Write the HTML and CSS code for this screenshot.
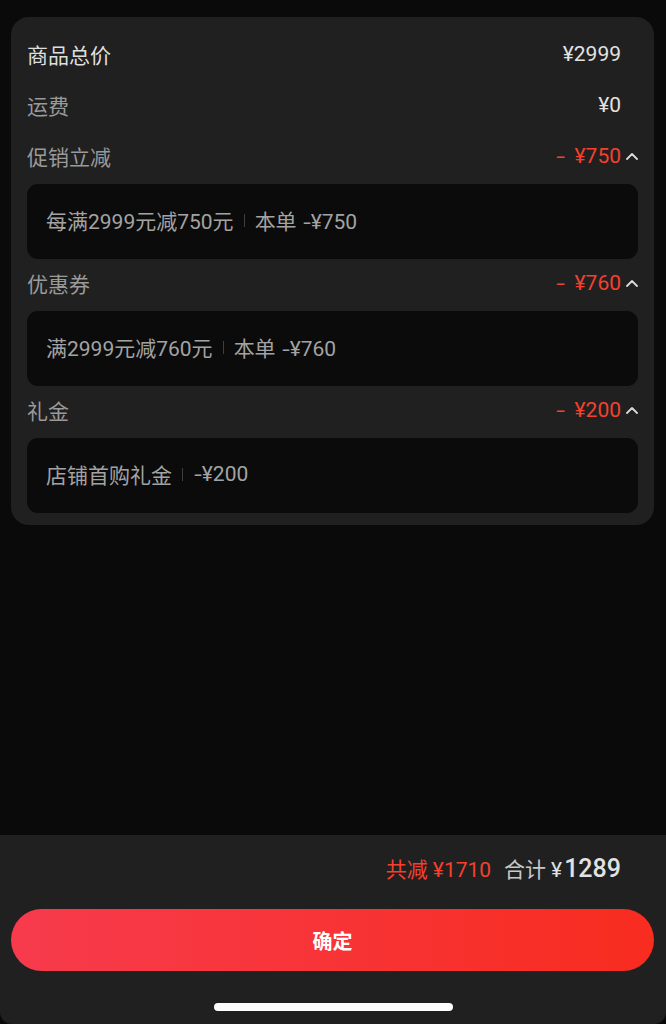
FILE: index.html
```html
<!DOCTYPE html>
<html lang="zh">
<head>
<meta charset="utf-8">
<link rel="stylesheet" href="styles.css">
</head>
<body>
<div class="page">
  <div class="card">
    <div class="row">
      <span class="label strong">商品总价</span>
      <span class="value">¥2999</span>
      <span class="chev-slot"></span>
    </div>
    <div class="row">
      <span class="label">运费</span>
      <span class="value">¥0</span>
      <span class="chev-slot"></span>
    </div>
    <div class="row">
      <span class="label">促销立减</span>
      <span class="value red"><span class="minus">-</span>¥750</span>
      <span class="chev-slot"><svg class="chev" viewBox="0 0 12 8"><path d="M1 7 L6 2 L11 7" /></svg></span>
    </div>
    <div class="detail">
      <span>每满2999元减750元</span><i class="sep"></i><span>本单 <span class="dash">-</span>¥750</span>
    </div>
    <div class="row sub">
      <span class="label">优惠券</span>
      <span class="value red"><span class="minus">-</span>¥760</span>
      <span class="chev-slot"><svg class="chev" viewBox="0 0 12 8"><path d="M1 7 L6 2 L11 7" /></svg></span>
    </div>
    <div class="detail">
      <span>满2999元减760元</span><i class="sep"></i><span>本单 <span class="dash">-</span>¥760</span>
    </div>
    <div class="row sub">
      <span class="label">礼金</span>
      <span class="value red"><span class="minus">-</span>¥200</span>
      <span class="chev-slot"><svg class="chev" viewBox="0 0 12 8"><path d="M1 7 L6 2 L11 7" /></svg></span>
    </div>
    <div class="detail">
      <span>店铺首购礼金</span><i class="sep"></i><span><span class="dash">-</span>¥200</span>
    </div>
  </div>

  <div class="bottom">
    <div class="summary">
      <span class="saved">共减 ¥1710</span>
      <span class="total-label">合计</span>
      <span class="total"><span class="yen">¥</span>1289</span>
    </div>
    <button class="confirm">确定</button>
    <div class="home-indicator"></div>
  </div>
</div>
</body>
</html>
```

FILE: styles.css
```css
* { box-sizing: border-box; }
html, body {
  margin: 0;
  padding: 0;
  background: #0a0a0a;
}
body {
  font-family: Roboto, "Noto Sans CJK SC", sans-serif;
  color: #dcdcdc;
}
.page {
  height: 1024px;
  display: flex;
  flex-direction: column;
}
.card {
  margin: 17px 12px 0 11px;
  background: #202020;
  border-radius: 18px;
  padding: 14px 16px 12px 16px;
}
.row {
  height: 51px;
  display: flex;
  align-items: center;
  font-size: 21px;
  padding-bottom: 5px;
}
.row.sub { height: 52px; }
.label {
  flex: 1;
  color: #9a9a9a;
}
.label.strong { color: #dedede; }
.value {
  color: #e2e2e2;
  font-size: 21px;
}
.value.red { color: #f5402e; }
.minus {
  display: inline-block;
  width: 9px;
  margin-right: 10px;
  text-align: center;
  transform: scaleX(1.5);
}
.dash {
  display: inline-block;
  margin: 0 1px 0 2px;
  transform: scaleX(1.3);
}
.chev-slot {
  width: 17px;
  display: flex;
  justify-content: flex-end;
  align-items: center;
}
.chev {
  width: 12px;
  height: 8px;
  fill: none;
  stroke: #d8d8d8;
  stroke-width: 1.8;
  stroke-linecap: round;
  stroke-linejoin: round;
}
.detail {
  height: 75px;
  background: #0b0b0b;
  border-radius: 11px;
  display: flex;
  align-items: center;
  padding-left: 19px;
  padding-bottom: 3px;
  font-size: 21px;
  color: #a3a3a3;
}
.sep {
  display: inline-block;
  width: 1px;
  height: 13px;
  background: #3e3e3e;
  margin: 0 10px;
}
.bottom {
  margin-top: auto;
  background: #202020;
  height: 189px;
  border-radius: 0 0 12px 12px;
  display: flex;
  flex-direction: column;
  align-items: center;
}
.summary {
  align-self: stretch;
  display: flex;
  justify-content: flex-end;
  align-items: baseline;
  padding: 18px 45px 0 0;
  height: 74px;
  font-size: 21px;
}
.saved { color: #f5402e; margin-right: 13px; }
.total-label { color: #c8c8c8; margin-right: 5px; }
.total {
  color: #e2e2e2;
  font-size: 25px;
  font-weight: 500;
}
.total .yen { font-size: 21px; font-weight: 400; margin-right: 2px; }
.confirm {
  width: 643px;
  height: 62px;
  border: 0;
  border-radius: 31px;
  background: linear-gradient(90deg, #f73b4d 0%, #f82c1f 100%);
  color: #ffffff;
  font-family: "Noto Sans CJK SC", sans-serif;
  font-size: 20px;
  font-weight: 700;
  margin-left: -1px;
}
.home-indicator {
  margin-top: 32px;
  width: 239px;
  height: 8px;
  border-radius: 4px;
  background: #ffffff;
}
```
